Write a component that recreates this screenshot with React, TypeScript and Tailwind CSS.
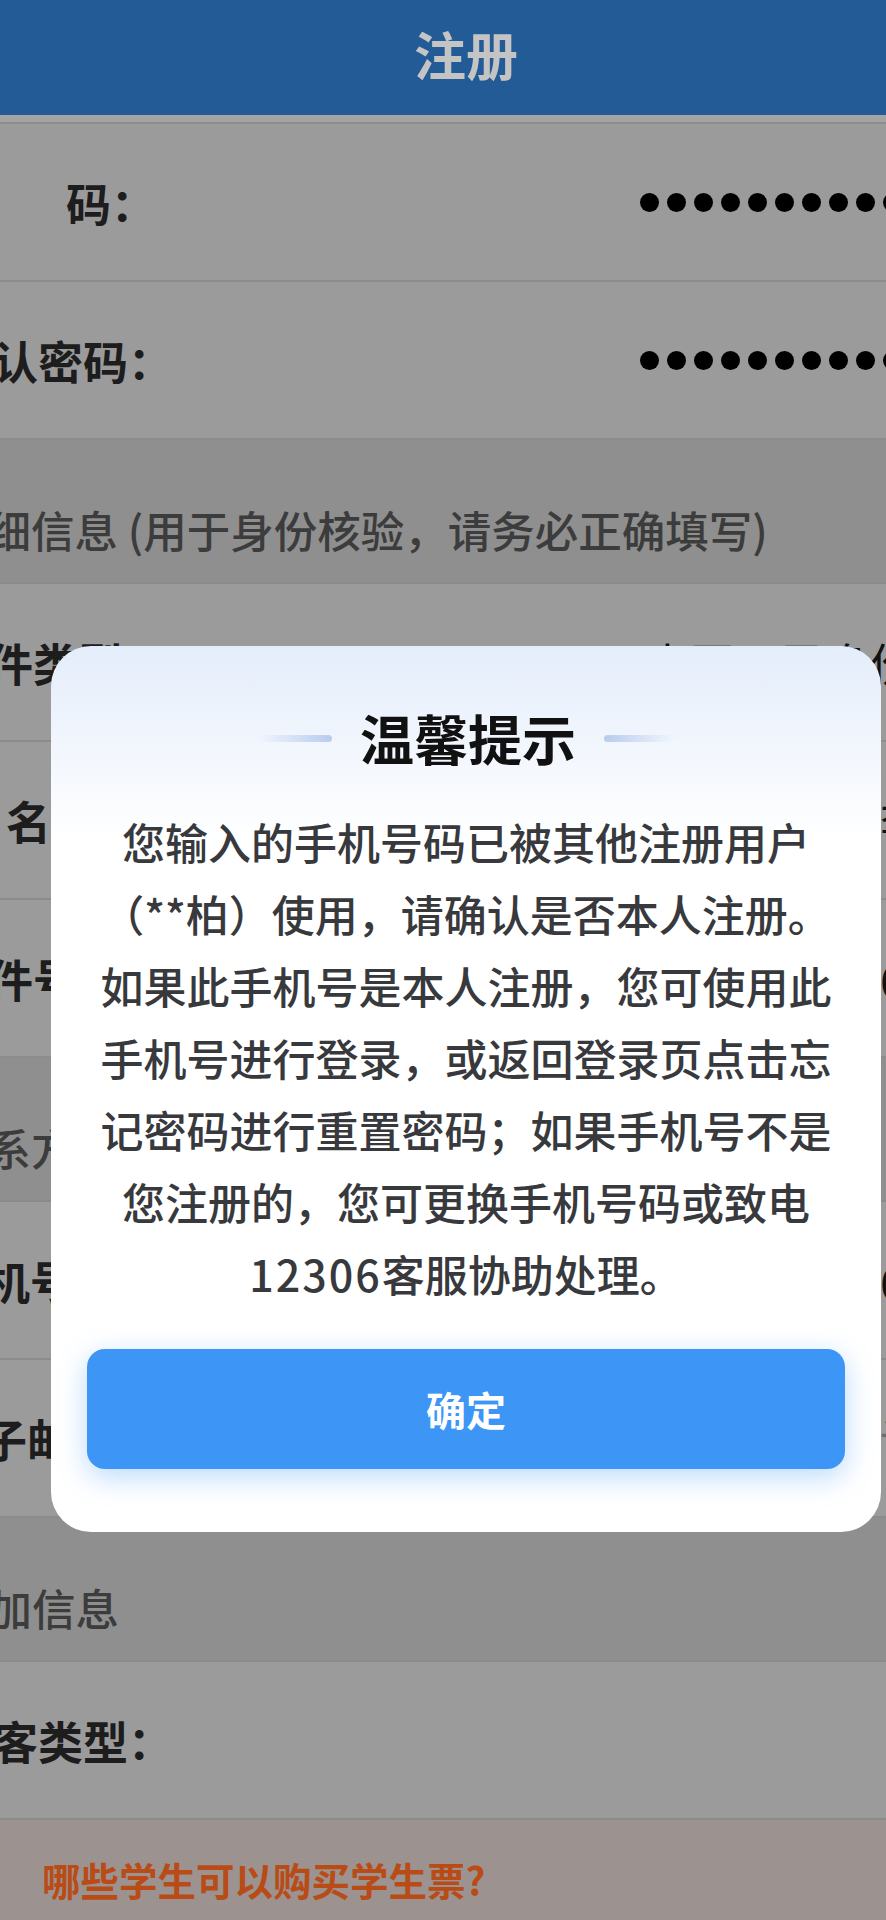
import React from "react";

const Dots = () => (
  <div className="flex gap-[8px]">
    {Array.from({ length: 11 }).map((_, i) => (
      <span key={i} className="block h-[19px] w-[19px] shrink-0 rounded-full bg-black" />
    ))}
  </div>
);

function Row({
  label,
  ml,
  labelW,
  children,
}: {
  label: string;
  ml: string;
  labelW: string;
  children?: React.ReactNode;
}) {
  return (
    <div className="flex h-[158px] items-center border-b-2 border-[#8c8c8c] bg-[#9b9b9b] whitespace-nowrap">
      <div className={`${labelW} shrink-0 text-[45px] font-bold leading-none text-[#1d1d1d]`}>
        <div className={ml}>{label}</div>
      </div>
      {children}
    </div>
  );
}

function Section({ label, ml }: { label: string; ml: string }) {
  return (
    <div className="flex h-[144px] items-start border-b-2 border-[#8a8a8a] bg-[#8f8f8f] pt-[60px] whitespace-nowrap">
      <div className={`${ml} text-[43.5px] font-medium leading-[59px] text-[#3c3c3c]`}>{label}</div>
    </div>
  );
}

export default function App() {
  return (
    <div className="relative h-[1920px] w-[886px] overflow-hidden bg-[#9b9b9b] font-['Noto_Sans_CJK_SC','Noto_Sans',sans-serif]">
      {/* header */}
      <div className="flex h-[115px] w-[932px] items-center justify-center bg-[#235b97] pb-[8px]">
        <span className="text-[52px] font-bold leading-none text-[#c4c4c4]">注册</span>
      </div>
      <div className="h-[9px] border-b-2 border-[#8c8c8c] bg-[#a4a4a4]" />

      <Row label="密　　码：" ml="-ml-[69px]" labelW="w-[640px]">
        <Dots />
      </Row>
      <Row label="确认密码：" ml="-ml-[52px]" labelW="w-[640px]">
        <Dots />
      </Row>
      <Section label="详细信息 (用于身份核验，请务必正确填写)" ml="-ml-[56px]" />
      <Row label="证件类型：" ml="-ml-[57px]" labelW="w-[645px]">
        <span className="text-[45px] leading-none text-[#111]">中国居民身份证</span>
      </Row>
      <Row label="姓　　名：" ml="-ml-[129px]" labelW="w-[880px]">
        <span className="text-[45px] leading-none text-[#111]">李</span>
      </Row>
      <Row label="证件号码：" ml="-ml-[57px]" labelW="w-[880px]">
        <span className="text-[45px] leading-none text-[#111]">6</span>
      </Row>
      <Section label="联系方式" ml="-ml-[56px]" />
      <Row label="手机号码：" ml="-ml-[60px]" labelW="w-[880px]">
        <span className="text-[45px] leading-none text-[#111]">6</span>
      </Row>
      <Row label="电子邮箱：" ml="-ml-[63px]" labelW="w-[880px]">
        <span className="text-[45px] leading-none text-[#6e6e6e]">请</span>
      </Row>
      <Section label="附加信息" ml="-ml-[55px]" />
      <Row label="旅客类型：" ml="-ml-[52px]" labelW="w-[640px]" />
      <div className="flex h-[100px] items-start bg-[#9c9290] pt-[31px] pl-[42px]">
        <span className="text-[38.5px] font-semibold leading-[56px] text-[#b94b17]">哪些学生可以购买学生票?</span>
      </div>

      {/* modal */}
      <div className="absolute left-[51px] top-[646px] w-[830px] rounded-[40px] bg-gradient-to-b from-[#e4edfb] via-white via-[22%] to-white px-[36px] pt-[57px] pb-[63px]">
        <div className="flex h-[70px] items-center justify-center gap-[28px]">
          <span className="block h-[7px] w-[74px] rounded-full bg-gradient-to-r from-transparent to-[#b8ccee]" />
          <span className="text-[54px] font-bold leading-none text-[#111]">温馨提示</span>
          <span className="block h-[7px] w-[70px] rounded-full bg-gradient-to-r from-[#b8ccee] to-transparent" />
        </div>
        <div className="mt-[32px] text-center text-[43px] font-medium leading-[72px] text-[#38393d] whitespace-nowrap">
          <div>您输入的手机号码已被其他注册用户</div>
          <div>（**柏）使用，请确认是否本人注册。</div>
          <div>如果此手机号是本人注册，您可使用此</div>
          <div>手机号进行登录，或返回登录页点击忘</div>
          <div>记密码进行重置密码；如果手机号不是</div>
          <div>您注册的，您可更换手机号码或致电</div>
          <div>
            <span className="tracking-[2px]">12306</span>客服协助处理。
          </div>
        </div>
        <div className="mt-[40px] flex h-[120px] items-center justify-center rounded-[18px] bg-[#3d95f5] shadow-[0_8px_28px_rgba(61,149,245,0.35)]">
          <span className="text-[40px] font-bold leading-none text-white">确定</span>
        </div>
      </div>
    </div>
  );
}
